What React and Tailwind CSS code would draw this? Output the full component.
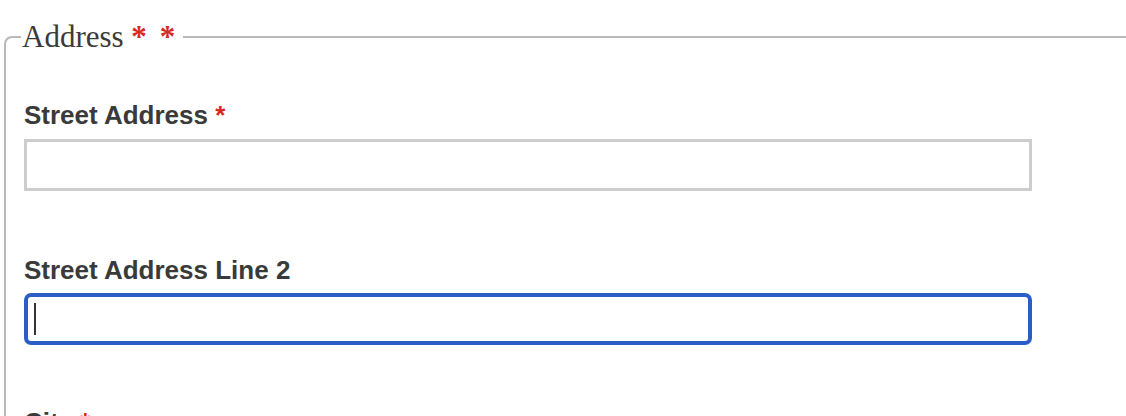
import React from 'react';

// Address block of a form: fieldset with legend, two text inputs, next label peeking in
function Label({ children, required, className = '' }) {
    return (
        <label className={`block text-[26px] leading-[30px] font-bold text-[#3a3a3a] ${className}`}>
            {children}
            {required && <span className="text-[#d8281e]"> *</span>}
        </label>
    );
}

export default function App() {
    return (
        <div className="w-[1126px] h-[416px] overflow-hidden bg-white font-['Liberation_Sans',Arial,sans-serif]">
            <fieldset className="ml-[4px] mt-[22px] w-[1122px] border-2 border-r-0 border-b-0 border-[#bababa] rounded-tl-[8px] pb-10">
                <legend className="ml-[15px] pl-[1px] pr-[8px] text-[31px] leading-[30px] text-[#3a3a3a] font-['Liberation_Serif',Georgia,serif]">
                    Address
                    <span className="text-[#d8281e] font-bold"> *</span>
                    <span className="text-[#d8281e] font-bold ml-[13px]">*</span>
                </legend>

                <div className="pl-[18px]">
                    {/* Street Address */}
                    <Label required className="mt-[48px]">Street Address</Label>
                    <input
                        type="text"
                        className="mt-[9px] block w-[1008px] h-[52px] border-[3px] border-[#cdcdcd] bg-white outline-none"
                    />

                    {/* Street Address Line 2 (focused) */}
                    <Label className="mt-[64px]">Street Address Line 2</Label>
                    <div className="mt-[8px] w-[1008px] h-[52px] border-[4px] border-[#2a5ec6] rounded-[7px] bg-white flex items-center pl-[6px]">
                        <span className="block w-[2px] h-[32px] bg-[#333]" />
                    </div>

                    {/* City */}
                    <Label required className="mt-[62px]">City</Label>
                </div>
            </fieldset>
        </div>
    );
}
